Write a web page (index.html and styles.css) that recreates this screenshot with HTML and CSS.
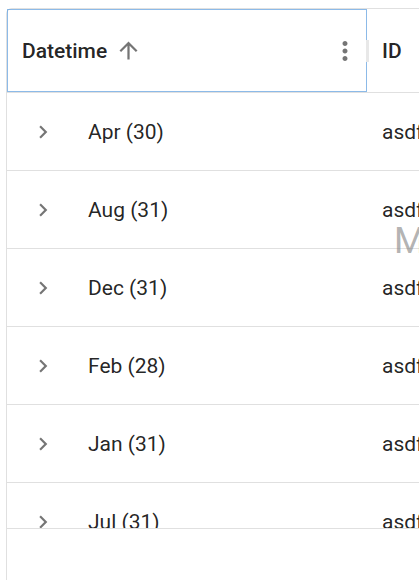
FILE: index.html
```html
<!DOCTYPE html>
<html>
<head>
<meta charset="utf-8">
<link rel="stylesheet" href="styles.css">
</head>
<body>
<div class="grid">
  <div class="header">
    <div class="hcell hcell-group">
      <span class="htitle">Datetime</span>
      <svg class="sort-icon" viewBox="0 0 24 24"><path d="M4 12l1.41 1.41L11 7.83V20h2V7.83l5.58 5.59L20 12l-8-8-8 8z"/></svg>
      <svg class="menu-icon" viewBox="0 0 24 24"><path d="M12 8c1.1 0 2-.9 2-2s-.9-2-2-2-2 .9-2 2 .9 2 2 2zm0 2c-1.1 0-2 .9-2 2s.9 2 2 2 2-.9 2-2-.9-2-2-2zm0 6c-1.1 0-2 .9-2 2s.9 2 2 2 2-.9 2-2-.9-2-2-2z"/></svg>
      <span class="separator"></span>
    </div>
    <div class="hcell hcell-id">
      <span class="htitle">ID</span>
    </div>
  </div>
  <div class="scroller">
    <div class="row">
      <div class="cell cell-group"><span class="toggle"><svg viewBox="0 0 24 24"><path d="M8.59 16.59 13.17 12 8.59 7.41 10 6l6 6-6 6z"/></svg></span><span>Apr (30)</span></div>
      <div class="cell cell-id">asdfasdf</div>
    </div>
    <div class="row">
      <div class="cell cell-group"><span class="toggle"><svg viewBox="0 0 24 24"><path d="M8.59 16.59 13.17 12 8.59 7.41 10 6l6 6-6 6z"/></svg></span><span>Aug (31)</span></div>
      <div class="cell cell-id">asdfasdf</div>
    </div>
    <div class="row">
      <div class="cell cell-group"><span class="toggle"><svg viewBox="0 0 24 24"><path d="M8.59 16.59 13.17 12 8.59 7.41 10 6l6 6-6 6z"/></svg></span><span>Dec (31)</span></div>
      <div class="cell cell-id">asdfasdf</div>
    </div>
    <div class="row">
      <div class="cell cell-group"><span class="toggle"><svg viewBox="0 0 24 24"><path d="M8.59 16.59 13.17 12 8.59 7.41 10 6l6 6-6 6z"/></svg></span><span>Feb (28)</span></div>
      <div class="cell cell-id">asdfasdf</div>
    </div>
    <div class="row">
      <div class="cell cell-group"><span class="toggle"><svg viewBox="0 0 24 24"><path d="M8.59 16.59 13.17 12 8.59 7.41 10 6l6 6-6 6z"/></svg></span><span>Jan (31)</span></div>
      <div class="cell cell-id">asdfasdf</div>
    </div>
    <div class="row">
      <div class="cell cell-group"><span class="toggle"><svg viewBox="0 0 24 24"><path d="M8.59 16.59 13.17 12 8.59 7.41 10 6l6 6-6 6z"/></svg></span><span>Jul (31)</span></div>
      <div class="cell cell-id">asdfasdf</div>
    </div>
  </div>
  <div class="footer"></div>
  <div class="watermark">MUI X Missing license key</div>
</div>
</body>
</html>
```

FILE: styles.css
```css
html, body {
  margin: 0;
  padding: 0;
  overflow: hidden;
  background: #fff;
}

body {
  font-family: Roboto, "Liberation Sans", sans-serif;
  color: rgba(0, 0, 0, 0.87);
  width: 419px;
  height: 580px;
}

.grid {
  position: relative;
  margin: 8px 0 0 6px;
  width: 800px;
  border: 1px solid #e0e0e0;
  border-radius: 6px;
  box-sizing: border-box;
}

.header {
  display: flex;
  height: 84px;
  box-sizing: border-box;
  border-bottom: 1px solid #e0e0e0;
}

.hcell {
  display: flex;
  align-items: center;
  box-sizing: border-box;
  padding-left: 15px;
  font-size: 21px;
  font-weight: 500;
}

.hcell-group {
  position: relative;
  width: 360px;
  outline: 1px solid rgba(25, 118, 210, 0.5);
  outline-offset: -1px;
}

.htitle {
  white-space: nowrap;
}

.sort-icon {
  width: 27px;
  height: 27px;
  margin-left: 8px;
  fill: rgba(0, 0, 0, 0.54);
}

.menu-icon {
  width: 30px;
  height: 30px;
  margin-left: auto;
  margin-right: 7px;
  fill: rgba(0, 0, 0, 0.54);
}

.separator {
  position: absolute;
  right: -2px;
  top: 31px;
  width: 3px;
  height: 22px;
  background: #e8e8e8;
}

.hcell-id {
  flex: 1;
}

.scroller {
  height: 435px;
  overflow: hidden;
}

.row {
  display: flex;
  height: 78px;
  box-sizing: border-box;
  border-bottom: 1px solid #e0e0e0;
}

.cell {
  display: flex;
  align-items: center;
  box-sizing: border-box;
  padding-left: 15px;
  font-size: 21px;
  white-space: nowrap;
}

.cell-group {
  width: 360px;
}

.toggle {
  flex: 0 0 42px;
  display: flex;
  align-items: center;
  justify-content: center;
  margin-right: 24px;
}

.toggle svg {
  width: 26px;
  height: 26px;
  fill: rgba(0, 0, 0, 0.54);
}

.cell-id {
  flex: 1;
}

.footer {
  height: 78px;
  border-top: 1px solid #e0e0e0;
}

.watermark {
  position: absolute;
  top: 214px;
  left: 387px;
  font-size: 36px;
  line-height: 36px;
  letter-spacing: 7.5px;
  color: #8282829e;
  white-space: nowrap;
  pointer-events: none;
}
```
